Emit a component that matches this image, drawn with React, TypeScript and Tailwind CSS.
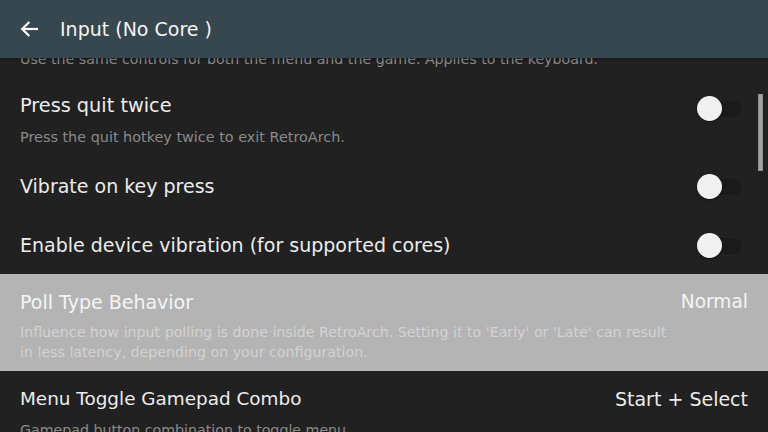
import React from "react";

function Toggle() {
  return (
    <div className="relative w-[44px] h-[25px] shrink-0">
      <div className="absolute left-[12px] top-[4.5px] w-[32px] h-[16px] rounded-full bg-[#1a1a1a]" />
      <div className="absolute left-0 top-0 w-[25px] h-[25px] rounded-full bg-[#f0f0f0] shadow-[0_1px_2px_rgba(0,0,0,0.5)]" />
    </div>
  );
}

export default function App() {
  return (
    <div className="w-[768px] h-[432px] bg-[#212121] overflow-hidden flex flex-col font-['DejaVu_Sans',sans-serif]">
      <header className="relative z-10 h-[58px] shrink-0 bg-[#37474f] flex items-center pl-[20px] shadow-[0_1px_3px_rgba(0,0,0,0.4)]">
        <svg width="18" height="16" viewBox="0 0 18 16" fill="none" stroke="#ffffff" strokeWidth="2.2" strokeLinecap="square">
          <path d="M17 8H2.5" />
          <path d="M8.5 1.8 2.3 8l6.2 6.2" />
        </svg>
        <span className="ml-[22px] text-[19px] leading-[26px] text-[#f4f4f4]">Input (No Core )</span>
      </header>

      <div className="relative flex-1 overflow-hidden">
        <div className="flex flex-col">
          <div className="-mt-[9px] pb-[9px] px-[20px] text-[14.2px] leading-[20px] text-[#8a8a8a] whitespace-nowrap">
            Use the same controls for both the menu and the game. Applies to the keyboard.
          </div>

          <div className="pt-[15px] pb-[9px] pl-[20px] pr-[27px] flex items-start justify-between">
            <div className="flex flex-col">
              <div className="text-[19.3px] leading-[26px] text-[#ececec]">Press quit twice</div>
              <div className="mt-[8px] text-[14.4px] leading-[20px] text-[#8a8a8a]">
                Press the quit hotkey twice to exit RetroArch.
              </div>
            </div>
            <div className="mt-[3px]">
              <Toggle />
            </div>
          </div>

          <div className="h-[59px] pl-[20px] pr-[27px] flex items-center justify-between">
            <div className="text-[19px] leading-[26px] text-[#ececec]">Vibrate on key press</div>
            <div className="mt-[2px]">
              <Toggle />
            </div>
          </div>

          <div className="h-[59px] pl-[20px] pr-[27px] flex items-center justify-between">
            <div className="text-[19px] leading-[26px] text-[#ececec]">Enable device vibration (for supported cores)</div>
            <div className="mt-[2px]">
              <Toggle />
            </div>
          </div>

          <div className="h-[97px] pt-[15px] pb-[9px] px-[20px] bg-[#b4b4b4] flex flex-col">
            <div className="flex items-center justify-between">
              <div className="text-[19px] leading-[26px] text-[#f4f4f4]">Poll Type Behavior</div>
              <div className="text-[18.6px] leading-[26px] text-[#f4f4f4]">Normal</div>
            </div>
            <div className="mt-[8px] text-[14.2px] leading-[19.5px] text-[#d2d2d2]">
              Influence how input polling is done inside RetroArch. Setting it to 'Early' or 'Late' can result
              <br />
              in less latency, depending on your configuration.
            </div>
          </div>

          <div className="pt-[15px] px-[20px] flex flex-col">
            <div className="flex items-center justify-between">
              <div className="text-[18.4px] leading-[26px] text-[#ececec]">Menu Toggle Gamepad Combo</div>
              <div className="text-[19px] leading-[26px] text-[#ececec]">Start + Select</div>
            </div>
            <div className="mt-[8px] text-[14.2px] leading-[20px] text-[#8a8a8a]">
              Gamepad button combination to toggle menu.
            </div>
          </div>
        </div>

        <div className="absolute right-[5px] top-[36px] w-[5px] h-[77px] bg-[#a3a3a3] border border-[#8f8f8f]" />
      </div>
    </div>
  );
}
